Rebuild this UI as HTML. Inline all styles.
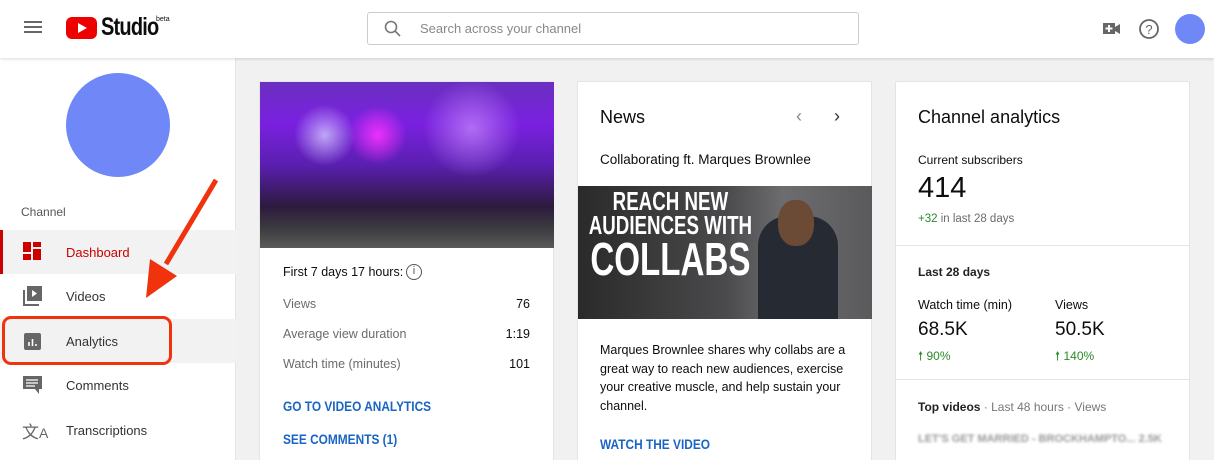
<!DOCTYPE html>
<html><head><meta charset="utf-8">
<style>
*{box-sizing:border-box;margin:0;padding:0}
html,body{width:1214px;height:460px;overflow:hidden}
body{font-family:"Liberation Sans",sans-serif;background:#f1f1f1;position:relative;color:#0d0d0d}
.abs{position:absolute}
.hdr{left:0;top:0;width:1214px;height:58px;background:#fff;box-shadow:0 1px 3px rgba(0,0,0,.15);z-index:2}
.side{left:0;top:58px;width:236px;height:402px;background:#fff;border-right:1px solid #e3e3e3}
.card{background:#fff;border:1px solid #e4e4e4;border-radius:2px}
.nav{position:absolute;left:0;width:236px;height:44px;font-size:13px;color:#333}
.nav span{position:absolute;left:66px;top:15px}
.g{color:#6b6b6b}
.blue{color:#1a65c4;font-size:13.5px;font-weight:bold;transform:scaleX(.88);transform-origin:left}
</style></head><body>
<div class="abs hdr">
  <div class="abs" style="left:24px;top:21px;width:18px;height:2px;background:#666;box-shadow:0 5px 0 #666,0 10px 0 #666"></div>
  <div class="abs" style="left:66px;top:17px;width:31px;height:22px;background:#e00;border-radius:6px"></div>
  <div class="abs" style="left:78px;top:23px;width:0;height:0;border-left:9px solid #fff;border-top:5px solid transparent;border-bottom:5px solid transparent"></div>
  <div class="abs" style="left:101px;top:13px;font-size:25px;font-weight:bold;letter-spacing:-1px;transform:scaleX(.8);transform-origin:left">Studio</div>
  <div class="abs" style="left:156px;top:16px;font-size:7px">beta</div>
  <div class="abs" style="left:367px;top:12px;width:492px;height:33px;border:1px solid #ccc;border-radius:3px"></div>
  <svg class="abs" style="left:383px;top:19px" width="20" height="20" viewBox="0 0 20 20"><circle cx="8" cy="8" r="5.5" fill="none" stroke="#777" stroke-width="1.6"/><line x1="12" y1="12" x2="17" y2="17" stroke="#777" stroke-width="1.6"/></svg>
  <div class="abs" style="left:420px;top:21px;font-size:13px;color:#888">Search across your channel</div>
  <svg class="abs" style="left:1102px;top:20px" width="20" height="18" viewBox="0 0 20 18"><rect x="1" y="3" width="12" height="11" fill="#666"/><path d="M13 7l5-3v10l-5-3z" fill="#666"/><path d="M7 5v7M3.5 8.5h7" stroke="#fff" stroke-width="2"/></svg>
  <svg class="abs" style="left:1138px;top:18px" width="22" height="22" viewBox="0 0 22 22"><circle cx="11" cy="11" r="9" fill="none" stroke="#666" stroke-width="1.8"/><text x="11" y="16" text-anchor="middle" font-size="13" fill="#666" font-family="Liberation Sans">?</text></svg>
  <div class="abs" style="left:1175px;top:14px;width:30px;height:30px;border-radius:50%;background:#7088f7"></div>
</div>
<div class="abs side">
  <div class="abs" style="left:66px;top:15px;width:104px;height:104px;border-radius:50%;background:#7088f7"></div>
  <div class="abs" style="left:21px;top:147px;font-size:12px;color:#555">Channel</div>
  <div class="nav" style="top:172px;background:#f2f2f2;border-left:3px solid #cc0000"><svg class="abs" style="left:20px;top:12px" width="19" height="19"><rect x="0" y="0" width="8" height="10" fill="#c00"/><rect x="10" y="0" width="8" height="5" fill="#c00"/><rect x="10" y="7" width="8" height="11" fill="#c00"/><rect x="0" y="12" width="8" height="6" fill="#c00"/></svg><span style="color:#c00;left:63px">Dashboard</span></div>
  <div class="nav" style="top:216px"><svg class="abs" style="left:23px;top:12px" width="20" height="20"><path d="M1 4v15h15" fill="none" stroke="#666" stroke-width="2"/><rect x="4" y="0" width="15" height="15" fill="#666"/><path d="M9 4v7l5-3.5z" fill="#fff"/></svg><span>Videos</span></div>
  <div class="nav" style="top:261px;background:#f2f2f2"><svg class="abs" style="left:24px;top:14px" width="17" height="17"><rect width="17" height="17" rx="2" fill="#666"/><path d="M5 9v4M8.5 6v7M12 11v2" stroke="#fff" stroke-width="1.6"/></svg><span>Analytics</span></div>
  <div class="abs" style="left:2px;top:258px;width:170px;height:49px;border:3px solid #f0320d;border-radius:9px"></div>
  <div class="nav" style="top:305px"><svg class="abs" style="left:23px;top:13px" width="20" height="20"><path d="M0 0h19v13h-3v5l-4-5H0z" fill="#666"/><path d="M3 4h12M3 7h12M3 10h9" stroke="#fff" stroke-width="1.2"/></svg><span>Comments</span></div>
  <div class="nav" style="top:350px"><div class="abs" style="left:22px;top:10px;font-size:17px;color:#666">文<span style="position:static;font-size:14px">A</span></div><span>Transcriptions</span></div>
  <svg class="abs" style="left:140px;top:118px" width="85" height="130"><line x1="76" y1="4" x2="26" y2="88" stroke="#f0320d" stroke-width="5"/><path d="M6 122L37 100 10 83z" fill="#f0320d"/></svg>
</div>

<div class="abs card" style="left:259px;top:81px;width:295px;height:385px">
  <div class="abs" style="left:0;top:0;width:294px;height:166px;background:
    radial-gradient(circle at 40% 32%,rgba(250,50,255,.9),transparent 14%),
    radial-gradient(circle at 22% 32%,rgba(210,200,255,.8),transparent 12%),
    radial-gradient(circle at 72% 28%,rgba(200,140,255,.7),transparent 20%),
    linear-gradient(#6a2fc0 0%,#7a20e0 25%,#5a1fb0 50%,#2d1a3e 75%,#3b3b3f 88%,#5a5a5a 100%)"></div>
  <div class="abs" style="left:23px;top:183px;font-size:12.5px">First 7 days 17 hours:</div>
  <div class="abs" style="left:146px;top:182px;width:16px;height:16px;border:1.4px solid #555;border-radius:50%;font-size:11px;text-align:center;line-height:13px;color:#555">i</div>
  <div class="abs g" style="left:23px;top:215px;font-size:12.5px">Views</div><div class="abs" style="right:23px;top:215px;font-size:12.5px">76</div>
  <div class="abs g" style="left:23px;top:245px;font-size:12.5px">Average view duration</div><div class="abs" style="right:23px;top:245px;font-size:12.5px">1:19</div>
  <div class="abs g" style="left:23px;top:275px;font-size:12.5px">Watch time (minutes)</div><div class="abs" style="right:23px;top:275px;font-size:12.5px">101</div>
  <div class="abs blue" style="left:23px;top:317px">GO TO VIDEO ANALYTICS</div>
  <div class="abs blue" style="left:23px;top:350px">SEE COMMENTS (1)</div>
</div>

<div class="abs card" style="left:577px;top:81px;width:295px;height:385px">
  <div class="abs" style="left:22px;top:25px;font-size:18px">News</div>
  <div class="abs" style="left:218px;top:24px;font-size:18px;color:#888">‹</div>
  <div class="abs" style="left:256px;top:24px;font-size:18px;color:#333">›</div>
  <div class="abs" style="left:22px;top:70px;font-size:13.5px">Collaborating ft. Marques Brownlee</div>
  <div class="abs" style="left:0;top:104px;width:294px;height:133px;overflow:hidden;background:linear-gradient(90deg,#2a2a2a,#4a4a4c 50%,#6d6d70 70%,#5a5a5c)">
    <div class="abs" style="left:180px;top:30px;width:80px;height:113px;background:#262a33;border-radius:30px 30px 0 0"></div>
    <div class="abs" style="left:200px;top:14px;width:36px;height:46px;background:#6b4a36;border-radius:45%"></div>
    <div class="abs" style="left:6px;top:3px;width:240px;text-align:center;color:#fff;font-weight:bold;font-size:26px;line-height:24px;transform:scaleX(.72);transform-origin:left">REACH NEW<br>AUDIENCES WITH<br><span style="font-size:46px;line-height:44px;font-weight:900">COLLABS</span></div>
  </div>
  <div class="abs" style="left:22px;top:259px;width:260px;font-size:12.5px;line-height:18.5px">Marques Brownlee shares why collabs are a great way to reach new audiences, exercise your creative muscle, and help sustain your channel.</div>
  <div class="abs blue" style="left:22px;top:355px">WATCH THE VIDEO</div>
</div>

<div class="abs card" style="left:895px;top:81px;width:295px;height:385px">
  <div class="abs" style="left:22px;top:25px;font-size:18px">Channel analytics</div>
  <div class="abs" style="left:22px;top:71px;font-size:12px">Current subscribers</div>
  <div class="abs" style="left:22px;top:90px;font-size:29px">414</div>
  <div class="abs g" style="left:22px;top:131px;font-size:11.5px"><span style="color:#2a8a2a">+32</span> in last 28 days</div>
  <div class="abs" style="left:0;top:163px;width:294px;height:1px;background:#e4e4e4"></div>
  <div class="abs" style="left:22px;top:183px;font-size:12px;font-weight:bold;color:#222">Last 28 days</div>
  <div class="abs" style="left:22px;top:216px;font-size:12.5px">Watch time (min)</div>
  <div class="abs" style="left:159px;top:216px;font-size:12.5px">Views</div>
  <div class="abs" style="left:22px;top:237px;font-size:19px">68.5K</div>
  <div class="abs" style="left:159px;top:237px;font-size:19px">50.5K</div>
  <div class="abs" style="left:22px;top:265px;font-size:12px;color:#2a8a2a">🠕 90%</div>
  <div class="abs" style="left:159px;top:265px;font-size:12px;color:#2a8a2a">🠕 140%</div>
  <div class="abs" style="left:0;top:297px;width:294px;height:1px;background:#e4e4e4"></div>
  <div class="abs" style="left:22px;top:318px;font-size:12px;color:#777"><b style="color:#222">Top videos</b> · Last 48 hours · Views</div>
  <div class="abs" style="left:22px;top:351px;font-size:11px;color:#999;filter:blur(1.2px);font-weight:bold">LET'S GET MARRIED - BROCKHAMPTO... 2.5K</div>
</div>
</body></html>
